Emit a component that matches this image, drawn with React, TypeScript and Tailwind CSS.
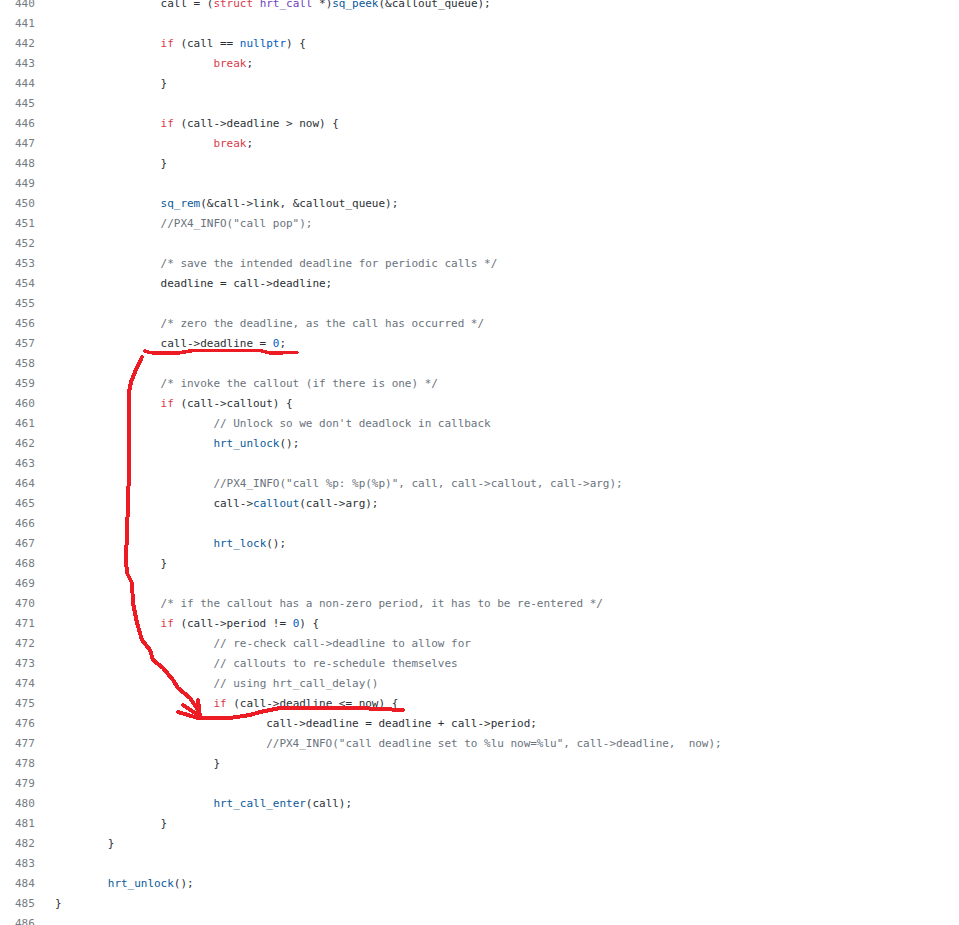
const k = "text-[#d73a49]";
const c = "text-[#6a737d]";
const n = "text-[#005cc5]";
const e = "text-[#6f42c1]";
const f = "text-[#0b5a9a]";
const d = "text-[#2b3036]";

type Tok = [string, string];
const lines: Tok[][] = [
  [[d, "\t\tcall = ("], [k, "struct"], [d, " "], [e, "hrt_call"], [d, " *)"], [f, "sq_peek"], [d, "(&callout_queue);"]],
  [],
  [[k, "\t\tif"], [d, " (call == "], [n, "nullptr"], [d, ") {"]],
  [[k, "\t\t\tbreak"], [d, ";"]],
  [[d, "\t\t}"]],
  [],
  [[k, "\t\tif"], [d, " (call->deadline > now) {"]],
  [[k, "\t\t\tbreak"], [d, ";"]],
  [[d, "\t\t}"]],
  [],
  [[f, "\t\tsq_rem"], [d, "(&call->link, &callout_queue);"]],
  [[c, "\t\t//PX4_INFO(\"call pop\");"]],
  [],
  [[c, "\t\t/* save the intended deadline for periodic calls */"]],
  [[d, "\t\tdeadline = call->deadline;"]],
  [],
  [[c, "\t\t/* zero the deadline, as the call has occurred */"]],
  [[d, "\t\tcall->deadline = "], [n, "0"], [d, ";"]],
  [],
  [[c, "\t\t/* invoke the callout (if there is one) */"]],
  [[k, "\t\tif"], [d, " (call->callout) {"]],
  [[c, "\t\t\t// Unlock so we don't deadlock in callback"]],
  [[f, "\t\t\thrt_unlock"], [d, "();"]],
  [],
  [[c, "\t\t\t//PX4_INFO(\"call %p: %p(%p)\", call, call->callout, call->arg);"]],
  [[d, "\t\t\tcall->"], [f, "callout"], [d, "(call->arg);"]],
  [],
  [[f, "\t\t\thrt_lock"], [d, "();"]],
  [[d, "\t\t}"]],
  [],
  [[c, "\t\t/* if the callout has a non-zero period, it has to be re-entered */"]],
  [[k, "\t\tif"], [d, " (call->period != "], [n, "0"], [d, ") {"]],
  [[c, "\t\t\t// re-check call->deadline to allow for"]],
  [[c, "\t\t\t// callouts to re-schedule themselves"]],
  [[c, "\t\t\t// using hrt_call_delay()"]],
  [[k, "\t\t\tif"], [d, " (call->deadline <= now) {"]],
  [[d, "\t\t\t\tcall->deadline = deadline + call->period;"]],
  [[c, "\t\t\t\t//PX4_INFO(\"call deadline set to %lu now=%lu\", call->deadline,  now);"]],
  [[d, "\t\t\t}"]],
  [],
  [[f, "\t\t\thrt_call_enter"], [d, "(call);"]],
  [[d, "\t\t}"]],
  [[d, "\t}"]],
  [],
  [[f, "\thrt_unlock"], [d, "();"]],
  [[d, "}"]],
  [],
];

export default function App() {
  return (
    <div className="relative h-[925px] w-[959px] overflow-hidden bg-white font-['DejaVu_Sans_Mono',monospace] text-[11px] leading-[20px] tracking-[-0.022px]">
      <div className="-mt-[6px] flex flex-col">
        {lines.map((toks, i) => (
          <div key={i} className="flex h-[20px]">
            <div className="w-[55px] shrink-0 pl-[15px] text-[#757b82]">{440 + i}</div>
            <div className="whitespace-pre [tab-size:8]">
              {toks.map((t, j) => (
                <span key={j} className={t[0]}>{t[1]}</span>
              ))}
            </div>
          </div>
        ))}
      </div>
      <svg className="absolute left-0 top-0" width="959" height="925" fill="none" stroke="#ed1c24" strokeLinejoin="round" strokeLinecap="round" shapeRendering="crispEdges">
        <path strokeWidth="3.5" d="M145 351 L150 352.5 L155 353 L178 353 L193 350.5 L260 350.5 L270 353 L297 352.5" />
        <path strokeWidth="4" d="M142 357 L135 372 L131 382 L129 392 L129 427 L129 470 L128 503 L126 560 L127 573 L132 583 L133 603 L137 623 L142 640 L150 650 L153 660 L163 668 L173 680 L178 688 L190 698 L198 710 L200 717" />
        <path strokeWidth="4" d="M198 700 L200 717 M183 705 L198 715 M178 712 L198 718 L230 718 L250 715 L260 712 L280 708 L317 708 L357 708 L403 710" />
      </svg>
    </div>
  );
}
